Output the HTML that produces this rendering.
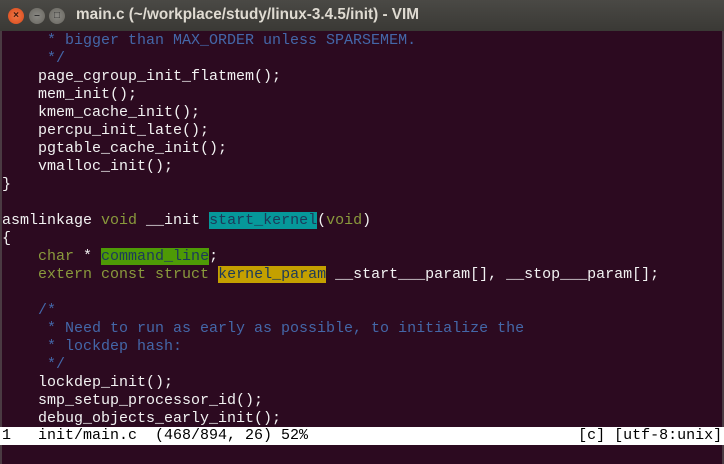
<!DOCTYPE html>
<html><head><meta charset="utf-8"><style>
html,body{margin:0;padding:0;width:724px;height:464px;overflow:hidden;background:#2c0a20}
#title{position:absolute;left:0;top:0;width:724px;height:31px;background:linear-gradient(#4a4945,#3a3935);border-bottom:1px solid #222}
#title .t{position:absolute;left:76px;top:6px;font:bold 15.3px "Liberation Sans",sans-serif;color:#dfdbd2}
.b{position:absolute;top:8px;width:16px;height:16px;border-radius:50%;font:bold 10px "Liberation Sans",sans-serif;text-align:center;line-height:16px}
#term{position:absolute;left:0;top:31px;width:724px;height:433px;background:#2c0a20;border-left:2px solid #4a3a42;border-right:2px solid #4a3a42;box-sizing:border-box}
pre{margin:0;position:absolute;left:2px;top:32px;font:15px/18px "Liberation Mono","DejaVu Sans Mono",monospace;color:#f2f2f2}
.c{color:#4467a8}.k{color:#8a9a3c}
.h1{background:#06989a;color:#1c3a5a}.h2{background:#4e9a06;color:#1c3a5a}.h3{background:#c4a000;color:#1c3a5a}
#st{position:absolute;left:0;top:427px;width:724px;height:18px;background:#fff;color:#000;font:15px/18px "Liberation Mono",monospace;white-space:pre;padding-left:2px;box-sizing:border-box}
</style></head><body>
<div id="title">
<div class="b" style="left:8px;background:radial-gradient(#f07746,#d9491a);color:#3a1a10">×</div>
<div class="b" style="left:29px;background:radial-gradient(#8a8984,#68665f);color:#333">–</div>
<div class="b" style="left:49px;background:radial-gradient(#8a8984,#68665f);color:#333">□</div>
<div class="t">main.c (~/workplace/study/linux-3.4.5/init) - VIM</div>
</div>
<div id="term"></div>
<pre><span class="c">     * bigger than MAX_ORDER unless SPARSEMEM.
     */</span>
    page_cgroup_init_flatmem();
    mem_init();
    kmem_cache_init();
    percpu_init_late();
    pgtable_cache_init();
    vmalloc_init();
}

asmlinkage <span class="k">void</span> __init <span class="h1">start_kernel</span>(<span class="k">void</span>)
{
    <span class="k">char</span> * <span class="h2">command_line</span>;
    <span class="k">extern const struct</span> <span class="h3">kernel_param</span> __start___param[], __stop___param[];

<span class="c">    /*
     * Need to run as early as possible, to initialize the
     * lockdep hash:
     */</span>
    lockdep_init();
    smp_setup_processor_id();
    debug_objects_early_init();</pre>
<div id="st">1   init/main.c  (468/894, 26) 52%                              [c] [utf-8:unix]</div>
</body></html>
